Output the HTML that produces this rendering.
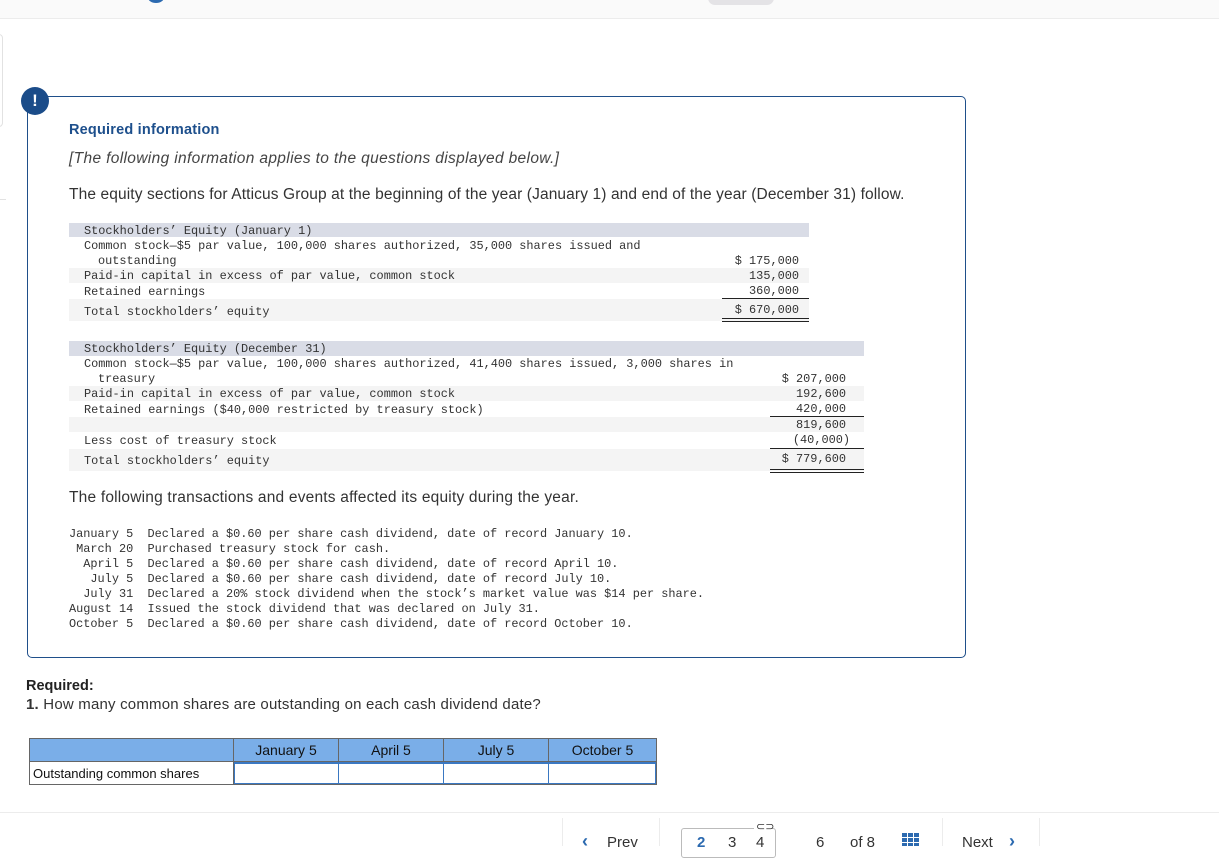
<!DOCTYPE html>
<html><head><meta charset="utf-8"><style>
*{margin:0;padding:0;box-sizing:border-box}
body{width:1219px;height:846px;position:relative;overflow:hidden;background:#fff;font-family:"Liberation Sans",sans-serif;color:#333}
.a{position:absolute;white-space:pre}
.m{font-family:"Liberation Mono",monospace;font-size:11.9px;color:#333;line-height:15px}
.bg{position:absolute}
.r{text-align:right}
.n{font-family:"Liberation Sans Narrow","Liberation Sans",sans-serif}
</style></head><body>
<div class="bg" style="left:0;top:0;width:1219px;height:19px;background:#fafafa;border-bottom:1px solid #ececec"></div>
<div class="bg" style="left:708px;top:-10px;width:66px;height:15px;background:#e4e3e6;border-radius:7px"></div>
<div class="bg" style="left:148px;top:-8px;width:16px;height:11px;background:#2c6ab0;border-radius:50%"></div>
<div class="bg" style="left:-6px;top:34px;width:9px;height:93px;border:1px solid #e2e2e2;border-radius:4px"></div>
<div class="bg" style="left:0;top:199px;width:6px;height:1px;background:#e2e2e2"></div>

<div class="bg" style="left:27px;top:96px;width:939px;height:562px;border:1px solid #1f4f8a;border-radius:5px"></div>
<div class="bg" style="left:21px;top:87px;width:28px;height:28px;background:#1b4c89;border-radius:50%;color:#fff;font-weight:bold;font-size:17px;text-align:center;line-height:28px">!</div>

<div class="a" style="left:69px;top:122px;font-size:14.5px;font-weight:bold;color:#1d4f8c;letter-spacing:0.2px">Required information</div>
<div class="a" style="left:69px;top:150px;font-size:15.5px;font-style:italic;color:#444;letter-spacing:0.35px">[The following information applies to the questions displayed below.]</div>
<div class="a" style="left:69px;top:186px;font-size:15.5px;color:#333;letter-spacing:0.12px">The equity sections for Atticus Group at the beginning of the year (January 1) and end of the year (December 31) follow.</div>

<!-- table 1 -->
<div class="bg" style="left:69px;top:223px;width:740px;height:14px;background:#d9dce6"></div>
<div class="bg" style="left:69px;top:268px;width:740px;height:15px;background:#f4f4f4"></div>
<div class="bg" style="left:69px;top:299px;width:740px;height:22px;background:#f4f4f4"></div>
<div class="a m" style="left:84px;top:224px">Stockholders’ Equity (January 1)</div>
<div class="a m" style="left:84px;top:239px">Common stock—$5 par value, 100,000 shares authorized, 35,000 shares issued and</div>
<div class="a m" style="left:98px;top:254px">outstanding</div>
<div class="a m" style="left:84px;top:269px">Paid-in capital in excess of par value, common stock</div>
<div class="a m" style="left:84px;top:285px">Retained earnings</div>
<div class="a m" style="left:84px;top:305px">Total stockholders’ equity</div>
<div class="a m r" style="left:700px;width:99px;top:254px">$ 175,000</div>
<div class="a m r" style="left:700px;width:99px;top:269px">135,000</div>
<div class="a m r" style="left:700px;width:99px;top:284px">360,000</div>
<div class="a m r" style="left:700px;width:99px;top:303px">$ 670,000</div>
<div class="bg" style="left:722px;top:298px;width:87px;height:1px;background:#222"></div>
<div class="bg" style="left:722px;top:318px;width:87px;height:1px;background:#222"></div>
<div class="bg" style="left:722px;top:321px;width:87px;height:1px;background:#222"></div>

<!-- table 2 -->
<div class="bg" style="left:69px;top:341px;width:795px;height:15px;background:#d9dce6"></div>
<div class="bg" style="left:69px;top:386px;width:795px;height:15px;background:#f4f4f4"></div>
<div class="bg" style="left:69px;top:417px;width:795px;height:15px;background:#f4f4f4"></div>
<div class="bg" style="left:69px;top:449px;width:795px;height:22px;background:#f4f4f4"></div>
<div class="a m" style="left:84px;top:342px">Stockholders’ Equity (December 31)</div>
<div class="a m" style="left:84px;top:357px">Common stock—$5 par value, 100,000 shares authorized, 41,400 shares issued, 3,000 shares in</div>
<div class="a m" style="left:98px;top:372px">treasury</div>
<div class="a m" style="left:84px;top:387px">Paid-in capital in excess of par value, common stock</div>
<div class="a m" style="left:84px;top:403px">Retained earnings ($40,000 restricted by treasury stock)</div>
<div class="a m" style="left:84px;top:434px">Less cost of treasury stock</div>
<div class="a m" style="left:84px;top:454px">Total stockholders’ equity</div>
<div class="a m r" style="left:746px;width:100px;top:372px">$ 207,000</div>
<div class="a m r" style="left:746px;width:100px;top:387px">192,600</div>
<div class="a m r" style="left:746px;width:100px;top:402px">420,000</div>
<div class="a m r" style="left:746px;width:100px;top:418px">819,600</div>
<div class="a m r" style="left:746px;width:104px;top:433px">(40,000)</div>
<div class="a m r" style="left:746px;width:100px;top:452px">$ 779,600</div>
<div class="bg" style="left:770px;top:416px;width:94px;height:1px;background:#222"></div>
<div class="bg" style="left:770px;top:448px;width:94px;height:1px;background:#222"></div>
<div class="bg" style="left:770px;top:469px;width:94px;height:1px;background:#222"></div>
<div class="bg" style="left:770px;top:472px;width:94px;height:1px;background:#222"></div>

<div class="a" style="left:69px;top:489px;font-size:15.5px;color:#333;letter-spacing:0.2px">The following transactions and events affected its equity during the year.</div>
<div class="a m" style="left:69px;top:527px">January 5  Declared a $0.60 per share cash dividend, date of record January 10.
 March 20  Purchased treasury stock for cash.
  April 5  Declared a $0.60 per share cash dividend, date of record April 10.
   July 5  Declared a $0.60 per share cash dividend, date of record July 10.
  July 31  Declared a 20% stock dividend when the stock’s market value was $14 per share.
August 14  Issued the stock dividend that was declared on July 31.
October 5  Declared a $0.60 per share cash dividend, date of record October 10.</div>

<div class="a" style="left:26px;top:678px;font-size:14.5px;font-weight:bold;color:#222">Required:</div>
<div class="a" style="left:26px;top:696px;font-size:15px;color:#333;letter-spacing:0.2px"><b>1.</b> How many common shares are outstanding on each cash dividend date?</div>

<!-- answer table -->
<div class="bg" style="left:29px;top:738px;width:628px;height:47px;border:1px solid #666;background:#fff"></div>
<div class="bg" style="left:30px;top:739px;width:626px;height:22px;background:#7aaee8"></div>
<div class="bg" style="left:29px;top:761px;width:628px;height:1px;background:#666"></div>
<div class="bg" style="left:233px;top:738px;width:1px;height:47px;background:#666"></div>
<div class="bg" style="left:338px;top:738px;width:1px;height:47px;background:#666"></div>
<div class="bg" style="left:443px;top:738px;width:1px;height:47px;background:#666"></div>
<div class="bg" style="left:548px;top:738px;width:1px;height:47px;background:#666"></div>
<div class="bg" style="left:234px;top:762px;width:422px;height:22px;border:1px solid #3a78c2;border-top-width:2px"></div>
<div class="bg" style="left:338px;top:762px;width:1px;height:22px;background:#3a78c2"></div>
<div class="bg" style="left:443px;top:762px;width:1px;height:22px;background:#3a78c2"></div>
<div class="bg" style="left:548px;top:762px;width:1px;height:22px;background:#3a78c2"></div>
<div class="a n" style="left:234px;width:104px;top:742px;text-align:center;font-size:14px;color:#111">January 5</div>
<div class="a n" style="left:339px;width:104px;top:742px;text-align:center;font-size:14px;color:#111">April 5</div>
<div class="a n" style="left:444px;width:104px;top:742px;text-align:center;font-size:14px;color:#111">July 5</div>
<div class="a n" style="left:549px;width:107px;top:742px;text-align:center;font-size:14px;color:#111">October 5</div>
<div class="a n" style="left:33px;top:766px;font-size:13px;color:#111">Outstanding common shares</div>

<!-- bottom nav -->
<div class="bg" style="left:0;top:812px;width:1219px;height:1px;background:#ececec"></div>
<div class="bg" style="left:562px;top:818px;width:1px;height:28px;background:#ececec"></div>
<div class="bg" style="left:659px;top:818px;width:1px;height:28px;background:#ececec"></div>
<div class="bg" style="left:942px;top:818px;width:1px;height:28px;background:#ececec"></div>
<div class="bg" style="left:1039px;top:818px;width:1px;height:28px;background:#ececec"></div>
<div class="a" style="left:582px;top:831px;font-size:18px;color:#2c6ab0;font-weight:bold">‹</div>
<div class="a" style="left:607px;top:834px;font-size:15px;color:#333">Prev</div>
<div class="bg" style="left:681px;top:828px;width:95px;height:30px;border:1px solid #bbb;border-radius:3px"></div>
<div class="bg" style="left:754px;top:823px;width:18px;height:10px;background:#fff"></div>
<div class="a" style="left:756px;top:820px;font-size:11px;color:#333">⊂⊃</div>
<div class="a" style="left:697px;top:834px;font-size:15px;color:#2c6ab0;font-weight:bold">2</div>
<div class="a" style="left:728px;top:834px;font-size:15px;color:#333">3</div>
<div class="a" style="left:756px;top:834px;font-size:15px;color:#333">4</div>
<div class="a" style="left:816px;top:834px;font-size:15px;color:#333">6</div>
<div class="a" style="left:850px;top:834px;font-size:15px;color:#333">of 8</div>
<div class="bg" style="left:902px;top:833px;width:17px;height:13px;background:repeating-linear-gradient(90deg,#2c6ab0 0 5px,#fff 5px 6px)"></div>
<div class="bg" style="left:902px;top:837px;width:17px;height:1px;background:#fff"></div>
<div class="bg" style="left:902px;top:842px;width:17px;height:1px;background:#fff"></div>
<div class="a" style="left:962px;top:834px;font-size:15px;color:#333">Next</div>
<div class="a" style="left:1009px;top:831px;font-size:18px;color:#2c6ab0;font-weight:bold">›</div>
</body></html>
